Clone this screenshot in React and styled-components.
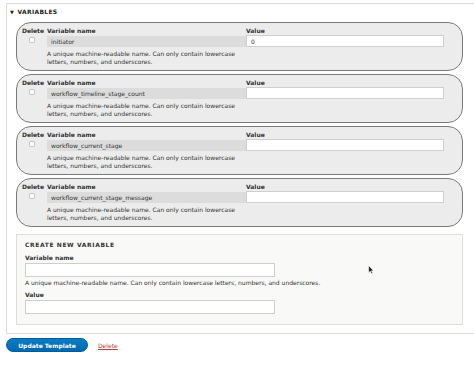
import React from "react";
import styled, { createGlobalStyle } from "styled-components";

const GlobalStyle = createGlobalStyle`
  html, body {
    margin: 0;
    padding: 0;
    background: #ffffff;
  }
  body {
    font-family: "DejaVu Sans", Verdana, sans-serif;
    font-size: 6px;
    color: #333;
  }
`;

const variables = [
  { name: "initiator", value: "0" },
  { name: "workflow_timeline_stage_count", value: "" },
  { name: "workflow_current_stage", value: "" },
  { name: "workflow_current_stage_message", value: "" },
];

const HELP =
  "A unique machine-readable name. Can only contain lowercase letters, numbers, and underscores.";

const App = () => {
  return (
    <Page>
      <GlobalStyle />
      <Fieldset>
        <Legend>
          <span>▼</span> VARIABLES
        </Legend>
        <CardList>
          {variables.map((v) => (
            <Card key={v.name}>
              <DeleteCol>
                <Label>Delete</Label>
                <Check type="checkbox" />
              </DeleteCol>
              <NameCol>
                <Label>Variable name</Label>
                <ReadonlyInput>{v.name}</ReadonlyInput>
                <Help $narrow>{HELP}</Help>
              </NameCol>
              <ValueCol>
                <Label>Value</Label>
                <TextInput defaultValue={v.value} />
              </ValueCol>
            </Card>
          ))}
        </CardList>
        <CreateBox>
          <CreateTitle>CREATE NEW VARIABLE</CreateTitle>
          <Field>
            <Label>Variable name</Label>
            <TextInput $short />
            <Help>{HELP}</Help>
          </Field>
          <Field>
            <Label>Value</Label>
            <TextInput $short />
          </Field>
          <Cursor viewBox="0 0 8 12" width="6" height="9">
            <path d="M1 1 L1 10 L3 8 L4.6 11.4 L6 10.8 L4.4 7.6 L7 7.6 Z" fill="#111" stroke="#fff" strokeWidth="0.6" />
          </Cursor>
        </CreateBox>
      </Fieldset>
      <Actions>
        <PrimaryButton>Update Template</PrimaryButton>
        <DeleteLink href="#">Delete</DeleteLink>
      </Actions>
    </Page>
  );
};

const Page = styled.div`
  padding: 3px 0 0 6px;
  width: 480px;
`;

const Fieldset = styled.div`
  border: 1px solid #dcdcdc;
  border-right: none;
  padding: 3px 10px 8px 9px;
`;

const Legend = styled.div`
  font-weight: bold;
  font-size: 6px;
  letter-spacing: 0.3px;
  color: #222;
  margin: 0 0 5px -6px;
  line-height: 9px;
  span {
    font-size: 5px;
    margin-right: 1px;
  }
`;

const CardList = styled.div`
  display: flex;
  flex-direction: column;
  gap: 3px;
  width: 447px;
`;

const Card = styled.div`
  display: grid;
  grid-template-columns: 28px 199px 198px;
  box-sizing: border-box;
  height: 49px;
  padding: 4px 0 0 2px;
  background: #ececec;
  border: 1.5px solid #7a7a7a;
  border-radius: 15px;
`;

const DeleteCol = styled.div`
  display: flex;
  flex-direction: column;
  align-items: center;
`;

const NameCol = styled.div`
  display: flex;
  flex-direction: column;
`;

const ValueCol = styled.div`
  display: flex;
  flex-direction: column;
`;

const Label = styled.div`
  font-weight: bold;
  font-size: 6px;
  line-height: 8px;
  color: #333;
  margin-bottom: 1px;
`;

const Check = styled.input`
  width: 6px;
  height: 6px;
  margin: 1px 2px 0 0;
  appearance: none;
  border: 1px solid #c8c8c8;
  border-radius: 1px;
  background: #fafafa;
`;

const ReadonlyInput = styled.div`
  box-sizing: border-box;
  height: 11px;
  line-height: 11px;
  padding-left: 4px;
  background: #dcdcdc;
  color: #333;
`;

const TextInput = styled.input`
  box-sizing: border-box;
  width: ${(p) => (p.$short ? "250px" : "198px")};
  height: ${(p) => (p.$short ? "14px" : "12px")};
  margin: ${(p) => (p.$short ? "0" : "-1px 0 0 0")};
  border: 1px solid #cfcfcf;
  background: #fff;
  font-family: inherit;
  font-size: 6px;
  padding: 0 4px;
  color: #333;
  outline: none;
`;

const Help = styled.div`
  font-size: 6px;
  line-height: 7.5px;
  color: #333;
  margin-top: ${(p) => (p.$narrow ? "3px" : "2px")};
  max-width: ${(p) => (p.$narrow ? "196px" : "none")};
`;

const CreateBox = styled.div`
  position: relative;
  box-sizing: border-box;
  width: 447px;
  height: 91px;
  margin-top: 7px;
  padding: 6px 8px 0 8px;
  background: #f9f9f8;
  border: 1px solid #dedede;
`;

const CreateTitle = styled.div`
  font-weight: bold;
  font-size: 6px;
  letter-spacing: 0.6px;
  color: #333;
  line-height: 8px;
  margin-bottom: 5px;
`;

const Field = styled.div`
  display: flex;
  flex-direction: column;
  margin-bottom: 4px;
`;

const Cursor = styled.svg`
  position: absolute;
  left: 351px;
  top: 30px;
`;

const Actions = styled.div`
  display: flex;
  align-items: center;
  gap: 10px;
  margin-top: 4px;
  height: 14px;
`;

const PrimaryButton = styled.button`
  width: 82px;
  height: 14px;
  border-radius: 8px;
  border: 1px solid #005c9c;
  background: linear-gradient(#0a7cc7, #0068ad);
  color: #fff;
  font-family: inherit;
  font-weight: bold;
  font-size: 6px;
  padding: 0;
`;

const DeleteLink = styled.a`
  color: #b3413a;
  font-size: 6px;
  text-decoration: underline;
`;

export default App;
